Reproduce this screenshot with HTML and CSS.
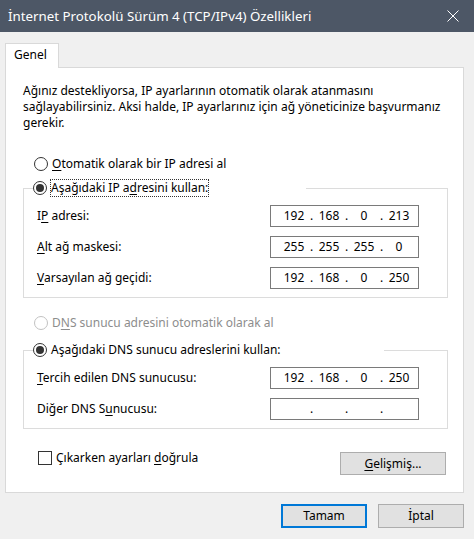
FILE: index.html
```html
<!DOCTYPE html>
<html lang="tr">
<head>
<meta charset="UTF-8">
<meta name="viewport" content="width=device-width, initial-scale=1.0">
<title>İnternet Protokolü Sürüm 4 (TCP/IPv4) Özellikleri</title>
<link rel="stylesheet" href="styles.css">
</head>
<body>
  <div class="titlebar">
    <span class="title">İnternet Protokolü Sürüm 4 (TCP/IPv4) Özellikleri</span>
    <svg class="close" width="12" height="12" viewBox="0 0 12 12">
      <path d="M0.5 0.5L11.5 11.5M11.5 0.5L0.5 11.5" stroke="#fff" stroke-width="1" fill="none"/>
    </svg>
  </div>
  <div class="dialog">
    <div class="tabs">
      <div class="tab">Genel</div>
    </div>
    <div class="panel">
      <p class="intro">Ağınız destekliyorsa, IP ayarlarının otomatik olarak atanmasını<br>sağlayabilirsiniz. Aksi halde, IP ayarlarınız için ağ yöneticinize başvurmanız<br>gerekir.</p>

      <div class="option option-first">
        <span class="radio"></span>
        <span><u>O</u>tomatik olarak bir IP adresi al</span>
      </div>
      <fieldset class="group">
        <legend class="legend-ip">
          <span class="radio checked"></span>
          <span class="focus">Aşağıdaki IP a<u>d</u>resini kullan:</span>
        </legend>
        <div class="field-row">
          <label>I<u>P</u> adresi:</label>
          <div class="ipbox"><span class="seg">192</span><span class="dot">.</span><span class="seg">168</span><span class="dot">.</span><span class="seg">0</span><span class="dot">.</span><span class="seg">213</span></div>
        </div>
        <div class="field-row">
          <label><u>A</u>lt ağ maskesi:</label>
          <div class="ipbox"><span class="seg">255</span><span class="dot">.</span><span class="seg">255</span><span class="dot">.</span><span class="seg">255</span><span class="dot">.</span><span class="seg">0</span></div>
        </div>
        <div class="field-row">
          <label><u>V</u>arsayılan ağ geçidi:</label>
          <div class="ipbox"><span class="seg">192</span><span class="dot">.</span><span class="seg">168</span><span class="dot">.</span><span class="seg">0</span><span class="dot">.</span><span class="seg">250</span></div>
        </div>
      </fieldset>

      <div class="option option-disabled">
        <span class="radio"></span>
        <span>D<u>N</u>S sunucu adresini otomatik olarak al</span>
      </div>
      <fieldset class="group group-dns">
        <legend class="legend-dns">
          <span class="radio checked"></span>
          <span>Aşağıdaki DNS sunucu adreslerini kullan:</span>
        </legend>
        <div class="field-row">
          <label><u>T</u>ercih edilen DNS sunucusu:</label>
          <div class="ipbox"><span class="seg">192</span><span class="dot">.</span><span class="seg">168</span><span class="dot">.</span><span class="seg">0</span><span class="dot">.</span><span class="seg">250</span></div>
        </div>
        <div class="field-row">
          <label>Diğer DNS S<u>u</u>nucusu:</label>
          <div class="ipbox"><span class="seg"></span><span class="dot">.</span><span class="seg"></span><span class="dot">.</span><span class="seg"></span><span class="dot">.</span><span class="seg"></span></div>
        </div>
      </fieldset>

      <div class="panel-footer">
        <div class="check">
          <span class="checkbox"></span>
          <span>Çıkarken ayarları <u>d</u>oğrula</span>
        </div>
        <button type="button" class="btn btn-advanced"><u>G</u>elişmiş...</button>
      </div>
    </div>
    <div class="actions">
      <button type="button" class="btn btn-default">Tamam</button>
      <button type="button" class="btn">İptal</button>
    </div>
  </div>
</body>
</html>
```

FILE: styles.css
```css
* {
  box-sizing: border-box;
}

body {
  margin: 0;
  width: 474px;
  height: 539px;
  overflow: hidden;
  background-color: #f0f0f0;
  font-family: "Noto Sans", "Open Sans", sans-serif;
  font-size: 12px;
  line-height: 16px;
  color: #000;
}

u {
  text-decoration-thickness: 1px;
  text-underline-offset: 2px;
}

.titlebar {
  height: 32px;
  background-color: #4d5766;
  color: #fff;
  display: flex;
  align-items: center;
  justify-content: space-between;
  padding: 0 15px 0 8px;
}

.title {
  font-size: 13.3px;
}

.dialog {
  padding: 11px 10px 0 5px;
}

.tabs {
  display: flex;
}

.tab {
  position: relative;
  z-index: 1;
  width: 54px;
  height: 25px;
  margin-bottom: -1px;
  padding: 3px 0 0 8px;
  background-color: #fff;
  border: 1px solid #d9d9d9;
  border-bottom: none;
}

.panel {
  background-color: #fff;
  border: 1px solid #d9d9d9;
  padding: 15px 15px 17px 17px;
}

.intro {
  margin: 0;
  white-space: nowrap;
}

.option {
  display: flex;
  align-items: center;
  gap: 4px;
  height: 16px;
  margin-left: 11px;
}

.option-first {
  margin-top: 25px;
}

.option-disabled {
  margin-top: 17px;
  color: #8d8d8d;
}

.option-disabled .radio {
  border-color: #c2c2c2;
}

.radio {
  width: 14px;
  height: 14px;
  border: 1px solid #333;
  border-radius: 50%;
  background-color: #fff;
  display: flex;
  align-items: center;
  justify-content: center;
  flex-shrink: 0;
}

.radio.checked::after {
  content: "";
  width: 8px;
  height: 8px;
  border-radius: 50%;
  background-color: #333;
}

.focus {
  outline: 1px dotted #333;
  outline-offset: 0;
}

.group {
  margin: 8px 0 0;
  min-width: 0;
  border: 1px solid #dcdcdc;
  padding: 9px 28px 8px 13px;
}

.group-dns {
  margin-top: 11px;
}

.group legend {
  display: flex;
  align-items: center;
  gap: 4px;
  height: 16px;
  padding: 0;
  margin-left: -4px;
}

.legend-ip {
  width: 273px;
}

.legend-dns {
  width: 351px;
}

.field-row {
  display: flex;
  align-items: center;
  justify-content: space-between;
  height: 22px;
}

.field-row + .field-row {
  margin-top: 9px;
}

.ipbox {
  width: 149px;
  height: 22px;
  border: 1px solid #7a7a7a;
  background-color: #fff;
  display: flex;
  align-items: center;
  padding-left: 10px;
}

.seg {
  width: 26px;
  text-align: center;
}

.dot {
  width: 9px;
  text-align: center;
}

.panel-footer {
  display: flex;
  justify-content: space-between;
  align-items: flex-start;
  margin-top: 21px;
}

.check {
  display: flex;
  align-items: center;
  gap: 4px;
  margin-left: 15px;
}

.checkbox {
  width: 14px;
  height: 14px;
  border: 1px solid #333;
  background-color: #fff;
}

.btn {
  height: 24px;
  width: 86px;
  padding: 0;
  font: inherit;
  color: #000;
  background-color: #e1e1e1;
  border: 1px solid #adadad;
}

.btn-advanced {
  width: 106px;
  height: 23px;
  margin-top: 2px;
  margin-right: 2px;
}

.btn-default {
  border: 2px solid #0078d7;
}

.actions {
  display: flex;
  justify-content: flex-end;
  gap: 11px;
  margin-top: 11px;
}
```
